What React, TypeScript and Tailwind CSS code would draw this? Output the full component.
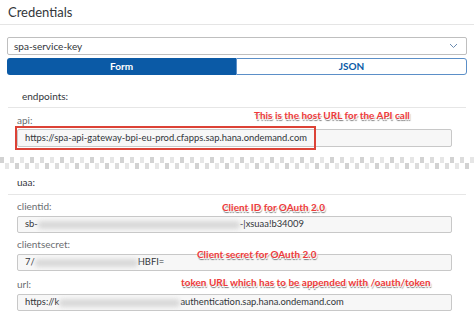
import React from "react";

const torn = Array.from({ length: 95 }, (_, i) => i);

const Note = ({ text, className }: { text: string; className: string }) => (
  <div
    className={`absolute whitespace-nowrap text-[10px] leading-[14px] font-bold text-[#ee3a3a] [text-shadow:0_0_1px_#fff,1px_1px_0_#fff,1px_2px_1px_#7a7a7a] ${className}`}
  >
    {text}
  </div>
);

const Label = ({ text, className = "" }: { text: string; className?: string }) => (
  <div className={`ml-[17px] h-[14px] leading-[14px] text-[10px] text-[#6a6d70] ${className}`}>
    {text}
  </div>
);

const Smudge = ({ w }: { w: number }) => (
  <span
    className="inline-block h-[8px] rounded-full bg-[#d9d9d9] blur-[2px]"
    style={{ width: w }}
  />
);

export default function App() {
  return (
    <div
      className="relative w-[474px] h-[322px] overflow-hidden bg-white text-[#32363a]"
      style={{ fontFamily: "Lato, 'Open Sans', sans-serif" }}
    >
      {/* Header */}
      <div className="h-[25px] border-b border-[#e5e5e5] pl-2 pt-[4px] text-[13px] leading-[16px] text-[#32363a]">
        Credentials
      </div>

      {/* Key select */}
      <div className="mx-[7px] mt-[12px] flex h-[18px] items-center justify-between rounded-[2px] border border-[#bfbfbf] px-[6px]">
        <span className="text-[10px] leading-none">spa-service-key</span>
        <svg width="9" height="6" viewBox="0 0 9 6" className="mr-[2px]">
          <path d="M1 1l3.5 3.5L8 1" fill="none" stroke="#6a8bb0" strokeWidth="1" />
        </svg>
      </div>

      {/* Form / JSON toggle */}
      <div className="mx-[7px] mt-[3px] flex h-[17px]">
        <div className="flex flex-1 items-center justify-center rounded-l-[3px] bg-[#0b5aa6] text-[10px] font-bold text-white">
          Form
        </div>
        <div className="flex flex-1 items-center justify-center rounded-r-[3px] border border-[#5b8fc8] text-[10px] font-bold text-[#0b5aa6]">
          JSON
        </div>
      </div>

      {/* endpoints */}
      <div className="mx-[8px] flex h-[33px] items-end border-b border-[#e6e6e6] pb-[4px] pl-[14px]">
        <span className="h-[14px] text-[10px] leading-[14px] text-[#32363a]">endpoints:</span>
      </div>

      <Label text="api:" className="mt-[5px]" />
      <div className="relative ml-[17px] mt-[2px] flex h-[18px] w-[435px] items-center rounded-[2px] border border-[#c8c8c8] bg-[#f7f7f7] px-[7px] text-[9.4px]">
        https://spa-api-gateway-bpi-eu-prod.cfapps.sap.hana.ondemand.com
        <div className="absolute -left-[3px] -top-[4px] h-[24px] w-[301px] border-2 border-[#dc4236]" />
      </div>

      {/* torn edge */}
      <div className="mt-[9px] flex h-[15px] gap-x-[1px] overflow-hidden">
        {torn.map((i) => (
          <div
            key={i}
            className={`h-[6px] w-[4px] shrink-0 ${
              i % 3 === 0 ? "bg-[#d2d2d2]" : i % 3 === 1 ? "bg-[#e6e6e6]" : "bg-[#dcdcdc]"
            } ${i % 2 === 0 ? "mt-[1px]" : "mt-[7px]"}`}
          />
        ))}
      </div>

      {/* uaa */}
      <div className="mx-[8px] h-[24px] border-b border-[#e6e6e6] pl-[9px] pt-[4px]">
        <span className="block h-[14px] text-[10px] leading-[14px]">uaa:</span>
      </div>

      <Label text="clientid:" className="mt-[4px]" />
      <div className="ml-[17px] mt-[3px] flex h-[17px] w-[435px] items-center rounded-[2px] border border-[#c8c8c8] bg-[#f7f7f7] px-[7px] text-[9.4px]">
        <span>sb-</span>
        <Smudge w={202} />
        <span>-|xsuaa!b34009</span>
      </div>

      <Label text="clientsecret:" className="mt-[4px]" />
      <div className="ml-[17px] mt-[3px] flex h-[17px] w-[435px] items-center rounded-[2px] border border-[#c8c8c8] bg-[#f7f7f7] px-[7px] text-[9.4px]">
        <span>7/</span>
        <Smudge w={103} />
        <span>HBFI=</span>
      </div>

      <Label text="url:" className="mt-[6px]" />
      <div className="ml-[17px] mt-[3px] flex h-[17px] w-[435px] items-center rounded-[2px] border border-[#c8c8c8] bg-[#f7f7f7] px-[7px] text-[9.4px]">
        <span>https://k</span>
        <Smudge w={121} />
        <span>authentication.sap.hana.ondemand.com</span>
      </div>

      {/* annotations */}
      <Note text="This is the host URL for the API call" className="left-[254px] top-[108px]" />
      <Note text="Client ID for OAuth 2.0" className="left-[222px] top-[200px]" />
      <Note text="Client secret for OAuth 2.0" className="left-[197px] top-[247px]" />
      <Note
        text="token URL which has to be appended with /oauth/token"
        className="left-[181px] top-[275px]"
      />
    </div>
  );
}
